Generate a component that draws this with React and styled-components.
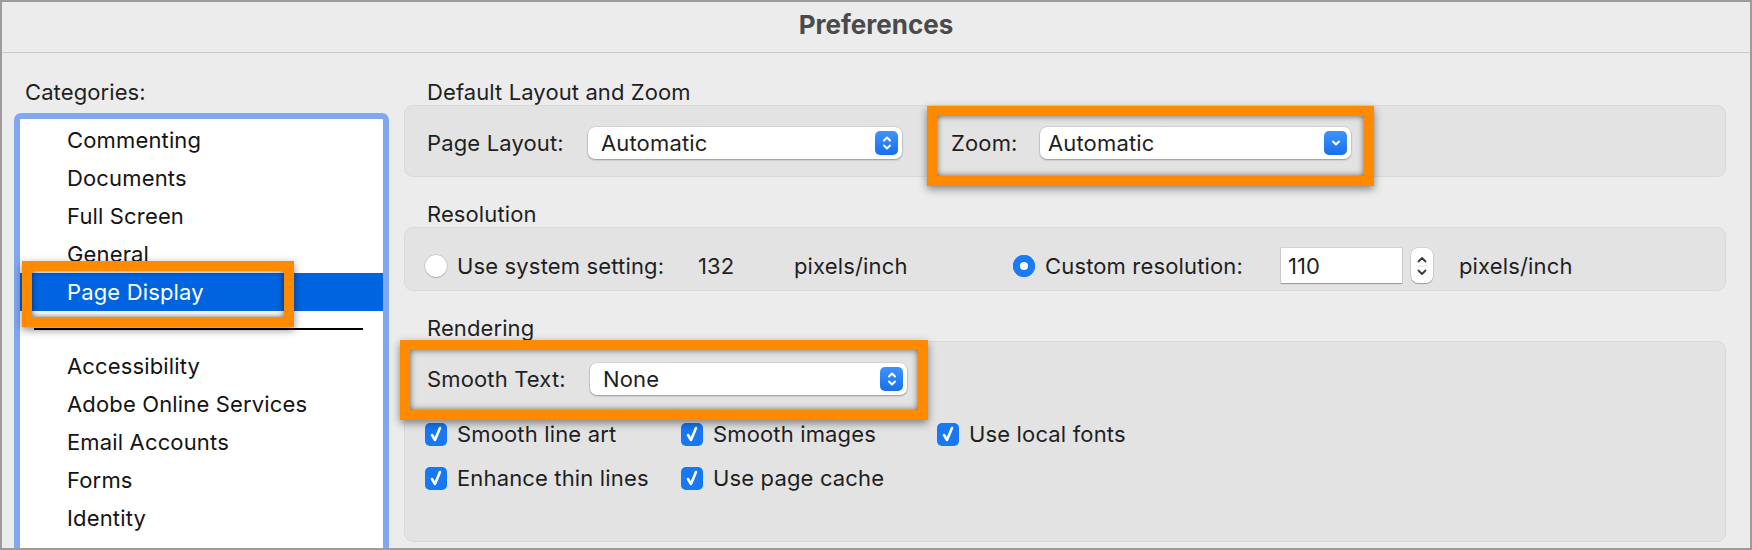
import React from 'react';
import styled, { createGlobalStyle } from 'styled-components';

const GlobalStyle = createGlobalStyle`
  html, body {
    margin: 0;
    padding: 0;
    background: #ececec;
  }
  body {
    font-family: Inter, "Noto Sans", "Liberation Sans", sans-serif;
    color: #1f1f1f;
    -webkit-font-smoothing: antialiased;
  }
`;

const Window = styled.div`
  width: 1752px;
  height: 550px;
  box-sizing: border-box;
  border: 2px solid #9c9c9c;
  background: #ececec;
  overflow: hidden;
  display: flex;
  flex-direction: column;
`;

const TitleBar = styled.div`
  flex: none;
  height: 51px;
  box-sizing: border-box;
  padding-bottom: 6px;
  border-bottom: 1px solid #c9c9c9;
  display: flex;
  align-items: center;
  justify-content: center;
  font-size: 26px;
  font-weight: 700;
  color: #4a4a4a;
`;

const Body = styled.div`
  display: flex;
  gap: 15px;
  padding: 27px 24px 0 12px;
`;

const Sidebar = styled.div`
  flex: none;
  width: 375px;
`;

const Heading = styled.div`
  font-size: 22px;
  letter-spacing: 0.1px;
  line-height: 25px;
  padding-left: ${p => p.$indent || 23}px;
  margin-bottom: ${p => p.$below || 0}px;
`;

const ListBox = styled.div`
  height: 460px;
  box-sizing: border-box;
  padding-top: 2px;
  background: #fff;
  border: 6px solid #80a7f0;
  border-bottom: none;
  border-radius: 7px 7px 0 0;
`;

const ListItem = styled.div`
  position: relative;
  height: 38px;
  line-height: 38px;
  padding-left: 47px;
  font-size: 22px;
  letter-spacing: 0.15px;
  color: ${p => (p.$selected ? '#fff' : '#141414')};
  background: ${p => (p.$selected ? '#0064e1' : 'transparent')};
`;

const ListRule = styled.div`
  height: 2px;
  margin: 17px 20px 17px 14px;
  background: #000;
`;

/* orange annotation frame drawn over the marked element */
const Marked = styled.div`
  position: relative;
  display: ${p => (p.$block ? 'block' : 'flex')};
  align-items: center;
  margin-left: ${p => p.$left || 0}px;
  &::after {
    content: '';
    position: absolute;
    inset: ${p => p.$inset};
    border: 10px solid #ff8a00;
    box-shadow: 0 3px 8px rgba(0, 0, 0, 0.45), inset 0 0 6px rgba(0, 0, 0, 0.6);
    pointer-events: none;
  }
`;

const Main = styled.div`
  flex: 1;
  display: flex;
  flex-direction: column;
`;

const Section = styled.section`
  & + & {
    margin-top: 25px;
  }
`;

const Group = styled.div`
  box-sizing: border-box;
  background: #e3e3e3;
  border: 1px solid #d9d9d9;
  border-radius: 9px;
  padding: ${p => p.$pad};
  height: ${p => (p.$height ? `${p.$height}px` : 'auto')};
`;

const Row = styled.div`
  display: flex;
  align-items: center;
  height: ${p => p.$height || 32}px;
`;

const Label = styled.span`
  flex: none;
  width: ${p => p.$width}px;
  font-size: 22px;
  letter-spacing: 0.15px;
  white-space: nowrap;
`;

const Select = styled.div`
  flex: none;
  width: ${p => p.$width}px;
  height: 32px;
  box-sizing: border-box;
  padding: 0 4px 0 ${p => p.$inset}px;
  display: flex;
  align-items: center;
  justify-content: space-between;
  background: #fff;
  border-radius: 7px;
  box-shadow: 0 0 0 0.5px rgba(0, 0, 0, 0.12), 0 1px 2px rgba(0, 0, 0, 0.3);
  font-size: 22px;
  letter-spacing: 0.15px;
`;

const SelectKnob = styled.span`
  width: 23px;
  height: 24px;
  border-radius: 5px;
  background: linear-gradient(#3f93f8, #1670ef);
  display: flex;
  align-items: center;
  justify-content: center;
`;

const Radio = styled.span`
  flex: none;
  width: 22px;
  height: 22px;
  box-sizing: border-box;
  border-radius: 50%;
  margin-right: 10px;
  background: ${p => (p.$on ? '#1a7bf4' : '#fff')};
  box-shadow: ${p =>
    p.$on
      ? 'inset 0 0 0 7px #1a7bf4'
      : '0 0 0 0.5px rgba(0,0,0,0.22), 0 1px 1px rgba(0,0,0,0.12)'};
  display: flex;
  align-items: center;
  justify-content: center;
  &::after {
    content: '';
    width: 8px;
    height: 8px;
    border-radius: 50%;
    background: ${p => (p.$on ? '#fff' : 'transparent')};
  }
`;

const TextField = styled.div`
  flex: none;
  width: 121px;
  height: 35px;
  box-sizing: border-box;
  padding-left: 7px;
  display: flex;
  align-items: center;
  background: #fff;
  box-shadow: 0 0 0 0.5px rgba(0, 0, 0, 0.15), 0 1px 1px rgba(0, 0, 0, 0.25);
  font-size: 22px;
`;

const Stepper = styled.div`
  flex: none;
  width: 22px;
  height: 35px;
  margin: 0 26px 0 9px;
  background: #fff;
  border-radius: 7px;
  box-shadow: 0 0 0 0.5px rgba(0, 0, 0, 0.15), 0 1px 1px rgba(0, 0, 0, 0.25);
  display: flex;
  align-items: center;
  justify-content: center;
`;

const CheckGrid = styled.div`
  display: grid;
  grid-template-columns: repeat(3, 256px);
  row-gap: 20px;
  margin: 27px 0 0 -2px;
`;

const Check = styled.label`
  display: flex;
  align-items: center;
  height: 24px;
  font-size: 22px;
  letter-spacing: 0.15px;
  white-space: nowrap;
`;

const Box = styled.span`
  flex: none;
  width: 22px;
  height: 23px;
  margin-right: 10px;
  border-radius: 5px;
  background: #1877f2;
  display: flex;
  align-items: center;
  justify-content: center;
`;

const Chevrons = ({ single }) => (
  <svg width="14" height="18" viewBox="0 0 14 18" fill="none" stroke="#fff" strokeWidth="2" strokeLinecap="round" strokeLinejoin="round">
    {single ? (
      <path d="M4 7.5 L7 10.5 L10 7.5" />
    ) : (
      <>
        <path d="M4 6.5 L7 3.5 L10 6.5" />
        <path d="M4 11.5 L7 14.5 L10 11.5" />
      </>
    )}
  </svg>
);

const Tick = () => (
  <svg width="16" height="18" viewBox="0 0 16 18" fill="none" stroke="#fff" strokeWidth="2.6" strokeLinecap="round" strokeLinejoin="round">
    <path d="M4 10 L7 15 L12 3" />
  </svg>
);

const Dropdown = ({ width, value, single, inset = 13 }) => (
  <Select $width={width} $inset={inset}>
    <span>{value}</span>
    <SelectKnob>
      <Chevrons single={single} />
    </SelectKnob>
  </Select>
);

const categoriesTop = ['Commenting', 'Documents', 'Full Screen', 'General'];
const categoriesBottom = ['Accessibility', 'Adobe Online Services', 'Email Accounts', 'Forms', 'Identity'];

const checks = ['Smooth line art', 'Smooth images', 'Use local fonts', 'Enhance thin lines', 'Use page cache'];

export default function App() {
  return (
    <>
      <GlobalStyle />
      <Window>
        <TitleBar>Preferences</TitleBar>
        <Body>
          <Sidebar>
            <Heading $indent={11} $below={8}>Categories:</Heading>
            <ListBox>
              {categoriesTop.map(c => (
                <ListItem key={c}>{c}</ListItem>
              ))}
              <Marked $block $inset="-12px 89px -16px 2px">
                <ListItem $selected>Page Display</ListItem>
              </Marked>
              <ListRule />
              {categoriesBottom.map(c => (
                <ListItem key={c}>{c}</ListItem>
              ))}
            </ListBox>
          </Sidebar>

          <Main>
            <Section>
              <Heading>Default Layout and Zoom</Heading>
              <Group $pad="21px 0 17px 22px">
                <Row>
                  <Label $width={161}>Page Layout:</Label>
                  <Dropdown width={314} value="Automatic" />
                  <Marked $left={49} $inset="-21px -23px -27px -24px">
                    <Label $width={89}>Zoom:</Label>
                    <Dropdown width={311} value="Automatic" single inset={8} />
                  </Marked>
                </Row>
              </Group>
            </Section>

            <Section>
              <Heading>Resolution</Heading>
              <Group $pad="20px 0 7px 20px">
                <Row $height={35}>
                  <Radio />
                  <Label $width={241}>Use system setting:</Label>
                  <Label $width={96}>132</Label>
                  <Label $width={219}>pixels/inch</Label>
                  <Radio $on />
                  <Label $width={236}>Custom resolution:</Label>
                  <TextField>110</TextField>
                  <Stepper>
                    <svg width="12" height="26" viewBox="0 0 12 26" fill="none" stroke="#3a3a3a" strokeWidth="1.8" strokeLinecap="round" strokeLinejoin="round">
                      <path d="M2.5 8.5 L6 5 L9.5 8.5" />
                      <path d="M0 13 H12" stroke="#e2e2e2" strokeWidth="1" />
                      <path d="M2.5 17.5 L6 21 L9.5 17.5" />
                    </svg>
                  </Stepper>
                  <Label $width={160}>pixels/inch</Label>
                </Row>
              </Group>
            </Section>

            <Section>
              <Heading>Rendering</Heading>
              <Group $pad="21px 0 0 22px" $height={201}>
                <Row>
                  <Marked $inset="-23px -21px -25px -27px">
                    <Label $width={163}>Smooth Text:</Label>
                    <Dropdown width={317} value="None" />
                  </Marked>
                </Row>
                <CheckGrid>
                  {checks.map(c => (
                    <Check key={c}>
                      <Box>
                        <Tick />
                      </Box>
                      {c}
                    </Check>
                  ))}
                </CheckGrid>
              </Group>
            </Section>
          </Main>
        </Body>
      </Window>
    </>
  );
}
